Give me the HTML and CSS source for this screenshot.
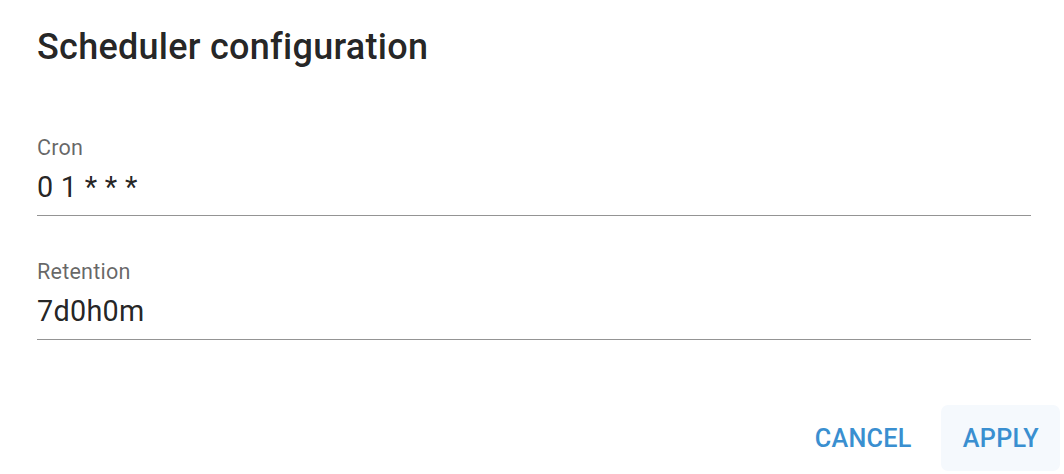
FILE: index.html
```html
<!DOCTYPE html>
<html>
<head>
<meta charset="utf-8">
<link rel="stylesheet" href="styles.css">
</head>
<body>
<div class="dialog">
  <h2 class="title">Scheduler configuration</h2>
  <div class="content">
    <div class="field">
      <label class="label">Cron</label>
      <div class="input">0 1 * * *</div>
    </div>
    <div class="field">
      <label class="label">Retention</label>
      <div class="input">7d0h0m</div>
    </div>
  </div>
  <div class="actions">
    <button class="btn">CANCEL</button>
    <button class="btn btn-focus">APPLY</button>
  </div>
</div>
</body>
</html>
```

FILE: styles.css
```css
* { box-sizing: border-box; }
html, body { margin: 0; background: #ffffff; }
body { font-family: Roboto, "Noto Sans", sans-serif; }
.dialog {
  display: flex;
  flex-direction: column;
  padding: 23px 33px 0 37px;
}
.title {
  margin: 0;
  font-size: 36px;
  font-weight: 500;
  line-height: 48px;
  color: rgba(0,0,0,0.87);
  letter-spacing: 0.27px;
}
.content {
  display: flex;
  flex-direction: column;
  gap: 43px;
  padding-top: 64px;
}
.field {
  display: flex;
  flex-direction: column;
  gap: 8px;
  padding-bottom: 10px;
  border-bottom: 1px solid rgba(0,0,0,0.42);
}
.label {
  font-size: 21.6px;
  line-height: 26px;
  letter-spacing: 0.2px;
  color: rgba(0,0,0,0.6);
}
.input {
  font-size: 28.8px;
  line-height: 36px;
  letter-spacing: 0.27px;
  color: rgba(0,0,0,0.87);
}
.actions {
  display: flex;
  justify-content: flex-end;
  gap: 8px;
  margin-right: -29px;
  margin-top: 65px;
}
.btn {
  font-family: Roboto, sans-serif;
  font-size: 25.2px;
  font-weight: 500;
  letter-spacing: 0.3px;
  color: #3a8fd0;
  background: transparent;
  border: none;
  border-radius: 7px;
  padding: 0 21px 0 22px;
  height: 66px;
}
.btn-focus { background: #f5f9fd; }
```
